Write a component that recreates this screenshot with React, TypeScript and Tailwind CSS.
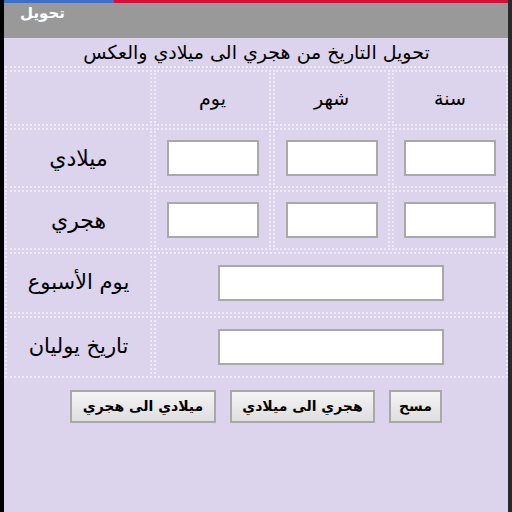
export default function App() {
  const cell = "border-2 border-dotted border-[#eeeaf7] flex items-center justify-center";
  const input = "w-[92px] h-[36px] bg-white border-2 border-[#a9a9a9]";
  const wide = "w-[226px] h-[36px] bg-white border-2 border-[#a9a9a9]";
  const btn =
    "h-[33px] px-2 bg-gradient-to-b from-[#f4f4f4] to-[#dedede] border-2 border-[#a8a8a8] text-[14px] font-bold text-black";

  return (
    <div
      className="w-[512px] h-[512px] flex flex-col bg-[#dcd3ec] border-l-4 border-l-black border-r-4 border-r-[#2a2a2a] overflow-hidden"
      style={{ fontFamily: '"DejaVu Sans", "Noto Sans", sans-serif' }}
    >
      {/* شريط علوي */}
      <div className="h-[3px] flex">
        <div className="w-[110px] bg-[#3d6fc8]" />
        <div className="flex-1 bg-[#d2103c]" />
      </div>

      {/* العنوان */}
      <div className="h-[35px] bg-[#999999] flex items-start px-4">
        <span className="text-white font-bold text-[15px] leading-[20px]" dir="rtl">
          تحويل
        </span>
      </div>

      <div className="px-[1px] pt-[1px]">
        <div className="grid grid-cols-[147px_117px_117px_116px] grid-rows-[29px_56px_60px_60px_62px_62px] gap-[2px] text-black">
          <div className={`${cell} col-span-4 border-t-0 border-x-0 text-[19px] leading-none`} dir="rtl">
            تحويل التاريخ من هجري الى ميلادي والعكس
          </div>

          <div className={cell} />
          <div className={`${cell} text-[19px]`}>يوم</div>
          <div className={`${cell} text-[19px]`}>شهر</div>
          <div className={`${cell} text-[19px]`}>سنة</div>

          <div className={`${cell} text-[22px]`}>ميلادي</div>
          <div className={cell}><div className={input} /></div>
          <div className={cell}><div className={input} /></div>
          <div className={cell}><div className={input} /></div>

          <div className={`${cell} text-[22px]`}>هجري</div>
          <div className={cell}><div className={input} /></div>
          <div className={cell}><div className={input} /></div>
          <div className={cell}><div className={input} /></div>

          <div className={`${cell} text-[21px]`} dir="rtl">يوم الأسبوع</div>
          <div className={`${cell} col-span-3`}><div className={wide} /></div>

          <div className={`${cell} text-[21px]`} dir="rtl">تاريخ يوليان</div>
          <div className={`${cell} col-span-3`}><div className={wide} /></div>
        </div>
      </div>

      {/* الأزرار */}
      <div className="flex justify-center gap-[14px] pt-[12px]" dir="rtl">
        <button className={`${btn} w-[53px]`}>مسح</button>
        <button className={`${btn} w-[145px]`}>هجري الى ميلادي</button>
        <button className={`${btn} w-[146px]`}>ميلادي الى هجري</button>
      </div>
    </div>
  );
}
